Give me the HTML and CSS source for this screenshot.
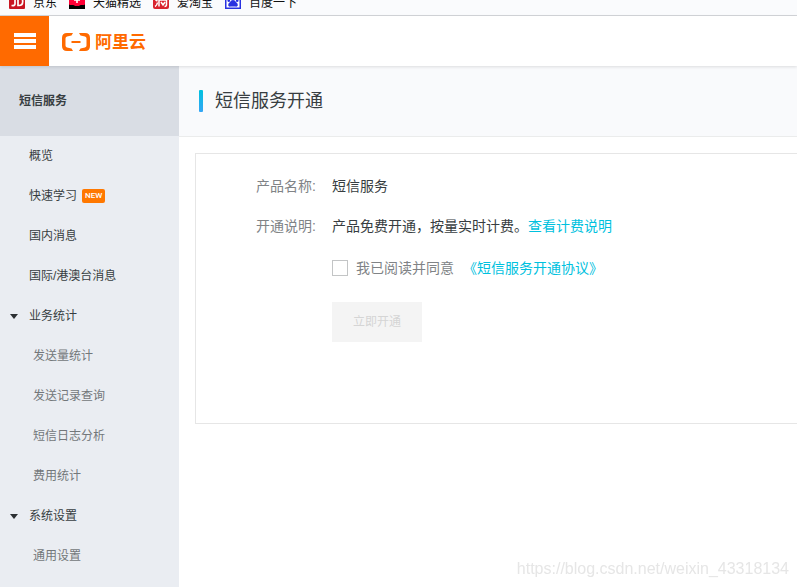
FILE: index.html
```html
<!DOCTYPE html>
<html lang="zh-CN">
<head>
<meta charset="utf-8">
<title>短信服务开通</title>
<link rel="stylesheet" href="styles.css">
</head>
<body>
<nav class="bookmarks" aria-label="书签">
  <a class="bookmark" href="#"><svg viewBox="0 0 16 16"><rect width="16" height="16" rx="1" fill="#c81623"/><path d="M6 4v7q0 2-3.500 1.500M9 4v8.500h1q3.700 0 3.700-4T10 4z" fill="none" stroke="#fff" stroke-width="1.700"/></svg>京东</a>
  <a class="bookmark" href="#"><svg viewBox="0 0 16 16"><rect width="16" height="16" fill="#000"/><path d="M0 0h16v11q0 1-1 1h-3q-1 0-2 1H6q-1-1-2-1H1q-1 0-1-1z" fill="#ff0036"/><path d="M8 4v6M5 7h6" stroke="#fff" stroke-width="1.600"/></svg>天猫精选</a>
  <a class="bookmark" href="#"><svg viewBox="0 0 16 16"><rect width="16" height="16" rx="2" fill="#d9232e"/><path d="M2 13.500q2-1 2.500-4M2.500 7l2 1M6 13.500V7h7.500v4.500q0 2-2 2M8 9l2 3 2-3" fill="none" stroke="#fff" stroke-width="1.500"/></svg>爱淘宝</a>
  <a class="bookmark" href="#"><svg viewBox="0 0 16 16"><rect x=".75" y=".75" width="14.500" height="14.500" fill="#fff" stroke="#2932e1" stroke-width="1.500"/><path d="M8 7q2 0 3 2 2.300 1.500 1.800 3.500-.5 1.500-2.500 1H5.700q-2 .5-2.500-1Q2.700 10.500 5 9 6 7 8 7z" fill="#2932e1"/><ellipse cx="3.800" cy="7.500" rx="1.300" ry="1.600" fill="#2932e1"/><ellipse cx="12.200" cy="7.500" rx="1.300" ry="1.600" fill="#2932e1"/></svg>百度一下</a>
</nav>
<header class="topbar">
  <button class="menu" type="button" aria-label="菜单"><svg viewBox="0 0 22 16"><path d="M0 0h22v4H0zM0 6h22v4H0zM0 12h22v4H0z" fill="#fff"/></svg></button>
  <a class="logo" href="#"><svg viewBox="0 0 30 18"><path d="M12 0H6Q1 0 1 5v8q0 5 5 5h6l-1.500-2.500L6 14.500q-1.500-.3-1.500-2v-7q0-1.700 1.500-2l4.500-1zM18 0h6q5 0 5 5v8q0 5-5 5h-6l1.500-2.500 4.500-1q1.500-.3 1.500-2v-7q0-1.700-1.500-2l-4.500-1zM10.500 8h9v2h-9z" fill="#ff6a00"/></svg><span class="logo-text">阿里云</span></a>
</header>
<div class="layout">
  <aside class="sidebar">
    <h2 class="sidebar-title">短信服务</h2>
    <nav class="side-nav">
      <a class="item" href="#">概览</a>
      <a class="item" href="#">快速学习<span class="badge">NEW</span></a>
      <a class="item" href="#">国内消息</a>
      <a class="item" href="#">国际/港澳台消息</a>
      <button class="item group" type="button"><span class="arrow"></span>业务统计</button>
      <a class="item sub" href="#">发送量统计</a>
      <a class="item sub" href="#">发送记录查询</a>
      <a class="item sub" href="#">短信日志分析</a>
      <a class="item sub" href="#">费用统计</a>
      <button class="item group" type="button"><span class="arrow"></span>系统设置</button>
      <a class="item sub" href="#">通用设置</a>
    </nav>
  </aside>
  <main class="main">
    <div class="page-head"><h1 class="page-title">短信服务开通</h1></div>
    <form class="card">
      <div class="row"><span class="label">产品名称:</span><span>短信服务</span></div>
      <div class="row"><span class="label">开通说明:</span><span>产品免费开通，按量实时计费。<a class="link" href="#">查看计费说明</a></span></div>
      <div class="row agree"><input class="check" type="checkbox" id="agree"><label class="agree-label" for="agree">我已阅读并同意</label><a class="link" href="#">《短信服务开通协议》</a></div>
      <button class="submit" type="submit" disabled>立即开通</button>
    </form>
  </main>
</div>
<div class="watermark">https://blog.csdn.net/weixin_43318134</div>
</body>
</html>
```
FILE: styles.css
```css
* {
  box-sizing: border-box;
}

body {
  margin: 0;
  min-height: 100vh;
  display: flex;
  flex-direction: column;
  background: #fff;
  color: #373d41;
  font: 12px/20px "Liberation Sans", "Noto Sans CJK SC", sans-serif;
}

a {
  color: inherit;
  text-decoration: none;
}

button {
  font: inherit;
  border: 0;
  padding: 0;
}

.bookmarks {
  display: flex;
  align-items: flex-end;
  gap: 12px;
  height: 16px;
  padding: 0 9px 2px;
  overflow: hidden;
  background: #fafbfd;
  border-bottom: 1px solid #d4d6da;
}

.bookmark {
  display: flex;
  align-items: flex-end;
  gap: 8px;
  height: 20px;
  color: #111;
  white-space: nowrap;
}

.bookmark svg {
  width: 16px;
  height: 16px;
  margin-bottom: 4px;
}

.topbar {
  display: flex;
  height: 50px;
  background: #fff;
  position: relative;
  box-shadow: 0 1px 3px rgba(0, 0, 0, 0.12);
}

.menu {
  display: flex;
  align-items: center;
  justify-content: center;
  width: 49px;
  background: #ff6a00;
}

.menu svg {
  width: 22px;
  height: 16px;
}

.logo {
  display: flex;
  align-items: center;
  gap: 4px;
  padding: 2px 0 0 12px;
  color: #ff6a00;
  font-size: 17px;
  font-weight: bold;
}

.logo svg {
  width: 30px;
  height: 18px;
}

.logo-text {
  padding-top: 2px;
}

.layout {
  display: flex;
  flex: 1;
}

.sidebar {
  flex: 0 0 179px;
  background: #eaedf2;
}

.sidebar-title {
  display: flex;
  align-items: center;
  height: 70px;
  margin: 0;
  padding-left: 19px;
  background: #d9dde4;
  font-size: 12px;
}

.side-nav {
  display: flex;
  flex-direction: column;
}

.item {
  display: flex;
  align-items: center;
  height: 40px;
  padding-left: 29px;
  background: none;
  color: #373d41;
}

.group {
  padding-left: 10px;
}

.arrow {
  width: 8px;
  margin-right: 11px;
  border: 4px solid transparent;
  border-top: 5px solid #2b2f33;
  border-bottom: 0;
}

.sub {
  padding-left: 33px;
  color: #73777a;
}

.badge {
  margin-left: 5px;
  padding: 0 3px;
  border-radius: 2px;
  background: #ff7800;
  color: #fff;
  font: 500 8px/14px Roboto, sans-serif;
}

.main {
  flex: 1;
  min-width: 0;
}

.page-head {
  display: flex;
  align-items: center;
  height: 71px;
  padding-left: 20px;
  background: #f9fafc;
  border-bottom: 1px solid #ebecec;
}

.page-title {
  display: flex;
  align-items: center;
  gap: 12px;
  margin: 0;
  font-size: 18px;
  font-weight: normal;
}

.page-title::before {
  content: "";
  width: 4px;
  height: 22px;
  border-radius: 1px;
  background: linear-gradient(#00c1de, #35a5f5);
}

.card {
  min-height: 271px;
  margin: 16px 0 0 16px;
  padding: 12px 0 12px 60px;
  border: 1px solid #e6e6e6;
  border-right: 0;
  font-size: 14px;
}

.row {
  display: flex;
  align-items: center;
  height: 40px;
}

.label {
  width: 76px;
  color: #808386;
}

.link {
  color: #00c1de;
}

.agree {
  height: 44px;
  padding-left: 76px;
}

.check {
  appearance: none;
  width: 16px;
  height: 16px;
  margin: 0 8px 0 0;
  border: 1px solid #c3c5c6;
  background: #fff;
}

.agree-label {
  margin-right: 9px;
  color: #808386;
}

.submit {
  width: 90px;
  height: 40px;
  margin: 12px 0 0 76px;
  background: #f4f4f4;
  color: #d5d5d5;
  font-size: 12px;
}

.watermark {
  position: fixed;
  right: 8px;
  bottom: 8px;
  color: #e6e6e6;
  font-size: 16px;
}
```
